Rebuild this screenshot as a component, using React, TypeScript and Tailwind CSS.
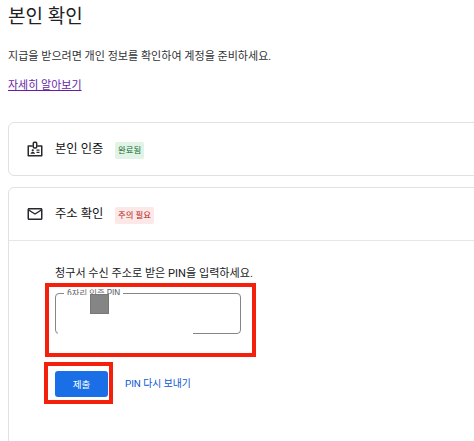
import type { ReactNode } from 'react';

interface SectionHeaderProps {
  icon: ReactNode;
  title: string;
  status: string;
  statusClass: string;
}

function BadgeIcon() {
  return (
    <svg viewBox="0 0 24 24" className="h-[18px] w-[18px]" fill="none" stroke="#26282b" strokeWidth="2">
      <path d="M9 8H3v13h18V8h-6" strokeLinejoin="round" />
      <rect x="9.7" y="3" width="4.6" height="7.5" rx="1.5" />
      <circle cx="9" cy="13.8" r="1.5" fill="#26282b" stroke="none" />
      <path d="M6 18.2c0-3 6-3 6 0z" fill="#26282b" stroke="none" />
      <path d="M14 13.5h4M14 16.5h4" strokeWidth="1.5" />
    </svg>
  );
}

function MailIcon() {
  return (
    <svg viewBox="0 0 24 24" className="h-[18px] w-[18px]" fill="#26282b">
      <path d="M22 6c0-1.1-.9-2-2-2H4c-1.1 0-2 .9-2 2v12c0 1.1.9 2 2 2h16c1.1 0 2-.9 2-2V6zm-2 0-8 5-8-5h16zm0 12H4V8l8 5 8-5v10z" />
    </svg>
  );
}

function SectionHeader({ icon, title, status, statusClass }: SectionHeaderProps) {
  return (
    <div className="flex h-[52px] items-center pl-[17px]">
      {icon}
      <h2 className="ml-[11px] w-[60px] text-[12.3px] leading-[18px] text-[#111214]">{title}</h2>
      <span className={`mt-[2px] h-[17px] rounded-[2px] px-[3px] text-[8.4px] leading-[17px] ${statusClass}`}>
        {status}
      </span>
    </div>
  );
}

function PinField() {
  return (
    <div className="-ml-[10px] mt-[2px] h-[74px] w-[211px] border-4 border-[#f5200c] pl-[6px] pt-[6px]">
      <div className="relative h-[41px] w-[186px] rounded-[4px] border border-[#85868b]">
        <span className="absolute -top-[7px] left-[8px] bg-white px-[3px] text-[8.4px] leading-[13px] text-[#5f6368]">
          6자리 인증 PIN
        </span>
        <div className="absolute top-px left-[2px] h-[41px] w-[135px] bg-white" />
        <div className="absolute top-0 left-[34px] h-[20px] w-[19px] border border-[#777777] bg-[#858585]" />
      </div>
    </div>
  );
}

export default function App() {
  return (
    <main className="h-[441px] overflow-hidden bg-white pl-[8px] font-[Roboto,'Noto_Sans_CJK_KR',sans-serif] whitespace-nowrap text-[#202124]">
      <h1 className="pt-[3px] text-[19px] leading-[28px]">본인 확인</h1>
      <p className="mt-[18px] text-[11.05px] leading-[16px] text-[#303236]">
        지급을 받으려면 개인 정보를 확인하여 계정을 준비하세요.
      </p>
      <a href="#" className="mt-[13px] block w-fit text-[11px] leading-[16px] text-[#681da8] underline">
        자세히 알아보기
      </a>

      <section className="mt-[28px] h-[54px] w-[480px] rounded-[6px] border border-[#e0e1e3]">
        <SectionHeader icon={<BadgeIcon />} title="본인 인증" status="완료됨" statusClass="bg-[#e1f3e6] text-[#0f6a2e]" />
      </section>

      <section className="mt-[11px] h-[270px] w-[480px] rounded-t-[6px] border border-[#e0e1e3]">
        <div className="border-b border-[#e5e6e8]">
          <SectionHeader icon={<MailIcon />} title="주소 확인" status="주의 필요" statusClass="bg-[#fce8e6] text-[#b3201b]" />
        </div>
        <div className="pt-[25px] pl-[46px]">
          <p className="text-[11.1px] leading-[16px]">청구서 수신 주소로 받은 PIN을 입력하세요.</p>
          <div className="-mt-px">
            <PinField />
          </div>
          <div className="mt-[5px] flex items-center">
            <div className="-ml-[11px] h-[42px] w-[69px] border-4 border-[#f5200c] pt-[5px] pl-[7px]">
              <button className="block h-[26px] w-[53px] rounded-[3px] bg-[#1a6fe6] text-[9.5px] leading-[25px] text-white">
                제출
              </button>
            </div>
            <button className="mt-[2px] ml-[12px] text-[9.8px] leading-[16px] text-[#0b57d0]">PIN 다시 보내기</button>
          </div>
        </div>
      </section>
    </main>
  );
}
